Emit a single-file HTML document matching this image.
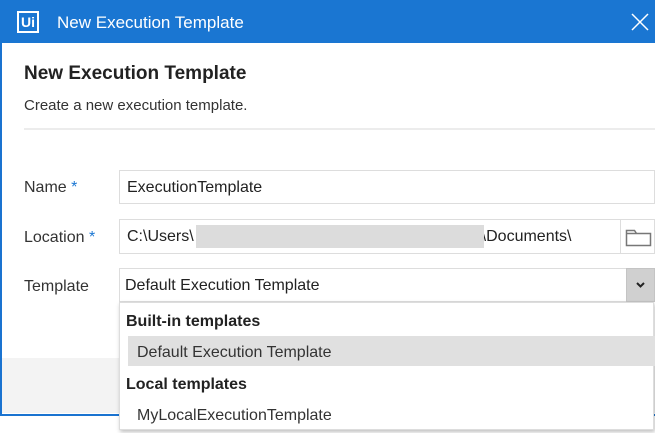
<!DOCTYPE html>
<html><head><style>
*{margin:0;padding:0;box-sizing:border-box}
body{width:655px;height:433px;background:#fff;position:relative;overflow:hidden;font-family:"Segoe UI","Liberation Sans",sans-serif;color:#222}
.abs{position:absolute}
.win{left:0;top:0;width:657px;height:416px;border:2px solid #1a73d0;border-top:none;background:#fff}
.title{left:0;top:0;width:655px;height:43px;background:#1a76d2;color:#fff;font-size:17px}
.box{border:1px solid #ddd;background:#fff;font-size:16px;line-height:34px;padding-left:7px}
.lbl{font-size:16px;color:#333}
.star{color:#1a76d2}
</style></head><body>
<div class="abs win"></div>
<div class="abs" style="left:2px;top:358px;width:653px;height:55px;background:#f3f3f3"></div>
<div class="abs title">
 <div class="abs" style="left:17px;top:11px;width:22px;height:22px;border:2px solid #fff;font-size:14px;font-weight:bold;line-height:18px;text-align:center">Ui</div>
 <div class="abs" style="left:57px;top:13px">New Execution Template</div>
 <svg class="abs" style="left:631px;top:13px" width="18" height="18"><path d="M1 1L17 17M17 1L1 17" stroke="#fff" stroke-width="1.5"/></svg>
</div>
<div class="abs" style="left:24px;top:63px;font-size:19px;font-weight:600;color:#222">New Execution Template</div>
<div class="abs" style="left:24px;top:97px;font-size:15px;color:#333">Create a new execution template.</div>
<div class="abs" style="left:24px;top:128px;width:631px;height:2px;background:#ececec"></div>

<div class="abs lbl" style="left:24px;top:179px">Name <span class="star">*</span></div>
<div class="abs box" style="left:119px;top:170px;width:536px;height:34px">ExecutionTemplate</div>

<div class="abs lbl" style="left:24px;top:229px">Location <span class="star">*</span></div>
<div class="abs box" style="left:119px;top:219px;width:502px;height:35px">C:\Users\<span style="display:inline-block;width:288px"></span>\Documents\</div>
<div class="abs" style="left:196px;top:225px;width:288px;height:23px;background:#dcdcdc"></div>
<div class="abs box" style="left:620px;top:219px;width:35px;height:35px;padding:0">
<svg width="35" height="35"><path d="M5.5 11.5V25.5H29.5V13.5H15.5L13.5 10.5H5.5Z M5.5 13.5H15.5" stroke="#777" stroke-width="1.5" fill="none"/></svg></div>

<div class="abs lbl" style="left:24px;top:278px">Template</div>
<div class="abs box" style="left:119px;top:268px;width:536px;height:34px;padding-left:5px">Default Execution Template</div>
<div class="abs" style="left:626px;top:268px;width:29px;height:34px;background:#d0d0d0;border:1px solid #c4c4c4">
<svg width="27" height="32"><path d="M10 14L13.5 17.5L17 14" stroke="#222" stroke-width="2" fill="none"/></svg></div>

<div class="abs" style="left:119px;top:302px;width:535px;height:128px;background:#fff;border:1px solid #ddd;box-shadow:1px 2px 4px rgba(0,0,0,.25)">
 <div class="abs" style="left:6px;top:10px;font-size:16px;font-weight:bold;color:#222">Built-in templates</div>
 <div class="abs" style="left:8px;top:33px;width:527px;height:30px;background:#e0e0e0"></div>
 <div class="abs" style="left:17px;top:41px;font-size:16px;color:#333">Default Execution Template</div>
 <div class="abs" style="left:6px;top:73px;font-size:16px;font-weight:bold;color:#222">Local templates</div>
 <div class="abs" style="left:17px;top:104px;font-size:16px;color:#333">MyLocalExecutionTemplate</div>
</div>
</body></html>
